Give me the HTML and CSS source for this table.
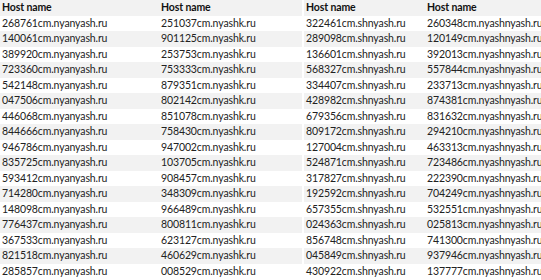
FILE: index.html
```html
<!DOCTYPE html>
<html>
<head>
<meta charset="utf-8">
<link rel="stylesheet" href="styles.css">
</head>
<body>
<div class="wrap">
<table class="hosts t1">
<colgroup><col class="c1"><col class="c2"></colgroup>
<thead><tr><th>Host name</th><th>Host name</th></tr></thead>
<tbody>
<tr><td>268761cm.nyanyash.ru</td><td>251037cm.nyashk.ru</td></tr>
<tr><td>140061cm.nyanyash.ru</td><td>901125cm.nyashk.ru</td></tr>
<tr><td>389920cm.nyanyash.ru</td><td>253753cm.nyashk.ru</td></tr>
<tr><td>723360cm.nyanyash.ru</td><td>753333cm.nyashk.ru</td></tr>
<tr><td>542148cm.nyanyash.ru</td><td>879351cm.nyashk.ru</td></tr>
<tr><td>047506cm.nyanyash.ru</td><td>802142cm.nyashk.ru</td></tr>
<tr><td>446068cm.nyanyash.ru</td><td>851078cm.nyashk.ru</td></tr>
<tr><td>844666cm.nyanyash.ru</td><td>758430cm.nyashk.ru</td></tr>
<tr><td>946786cm.nyanyash.ru</td><td>947002cm.nyashk.ru</td></tr>
<tr><td>835725cm.nyanyash.ru</td><td>103705cm.nyashk.ru</td></tr>
<tr><td>593412cm.nyanyash.ru</td><td>908457cm.nyashk.ru</td></tr>
<tr><td>714280cm.nyanyash.ru</td><td>348309cm.nyashk.ru</td></tr>
<tr><td>148098cm.nyanyash.ru</td><td>966489cm.nyashk.ru</td></tr>
<tr><td>776437cm.nyanyash.ru</td><td>800811cm.nyashk.ru</td></tr>
<tr><td>367533cm.nyanyash.ru</td><td>623127cm.nyashk.ru</td></tr>
<tr><td>821518cm.nyanyash.ru</td><td>460629cm.nyashk.ru</td></tr>
<tr><td>285857cm.nyanyash.ru</td><td>008529cm.nyashk.ru</td></tr>
</tbody>
</table>
<table class="hosts t2">
<colgroup><col class="c3"><col class="c4"></colgroup>
<thead><tr><th>Host name</th><th>Host name</th></tr></thead>
<tbody>
<tr><td>322461cm.shnyash.ru</td><td>260348cm.nyashnyash.ru</td></tr>
<tr><td>289098cm.shnyash.ru</td><td>120149cm.nyashnyash.ru</td></tr>
<tr><td>136601cm.shnyash.ru</td><td>392013cm.nyashnyash.ru</td></tr>
<tr><td>568327cm.shnyash.ru</td><td>557844cm.nyashnyash.ru</td></tr>
<tr><td>334407cm.shnyash.ru</td><td>233713cm.nyashnyash.ru</td></tr>
<tr><td>428982cm.shnyash.ru</td><td>874381cm.nyashnyash.ru</td></tr>
<tr><td>679356cm.shnyash.ru</td><td>831632cm.nyashnyash.ru</td></tr>
<tr><td>809172cm.shnyash.ru</td><td>294210cm.nyashnyash.ru</td></tr>
<tr><td>127004cm.shnyash.ru</td><td>463313cm.nyashnyash.ru</td></tr>
<tr><td>524871cm.shnyash.ru</td><td>723486cm.nyashnyash.ru</td></tr>
<tr><td>317827cm.shnyash.ru</td><td>222390cm.nyashnyash.ru</td></tr>
<tr><td>192592cm.shnyash.ru</td><td>704249cm.nyashnyash.ru</td></tr>
<tr><td>657355cm.shnyash.ru</td><td>532551cm.nyashnyash.ru</td></tr>
<tr><td>024363cm.shnyash.ru</td><td>025813cm.nyashnyash.ru</td></tr>
<tr><td>856748cm.shnyash.ru</td><td>741300cm.nyashnyash.ru</td></tr>
<tr><td>045849cm.shnyash.ru</td><td>937946cm.nyashnyash.ru</td></tr>
<tr><td>430922cm.shnyash.ru</td><td>137777cm.nyashnyash.ru</td></tr>
</tbody>
</table>
</div>
</body>
</html>
```
FILE: styles.css
```css
html, body {
  margin: 0;
  padding: 0;
  background: #ffffff;
}
body {
  font-family: Lato, "Liberation Sans", sans-serif;
  font-size: 10.5px;
  letter-spacing: -0.12px;
  color: #222222;
}
.wrap {
  display: flex;
  gap: 2px;
  width: 541px;
}
.hosts {
  border-collapse: collapse;
  table-layout: fixed;
}
.t1 { width: 302px; }
.t2 { width: 237px; }
.c1 { width: 159px; }
.c2 { width: 143px; }
.c3 { width: 121px; }
.c4 { width: 116px; }
.hosts th,
.hosts td {
  height: 15.5px;
  padding: 0 0 0 2px;
  text-align: left;
  white-space: nowrap;
  line-height: 15.5px;
  box-sizing: border-box;
}
.hosts th {
  font-weight: bold;
  background: #f2f2f2;
  color: #111111;
}
.hosts tbody tr:nth-child(even) td {
  background: #f2f2f2;
}
```
